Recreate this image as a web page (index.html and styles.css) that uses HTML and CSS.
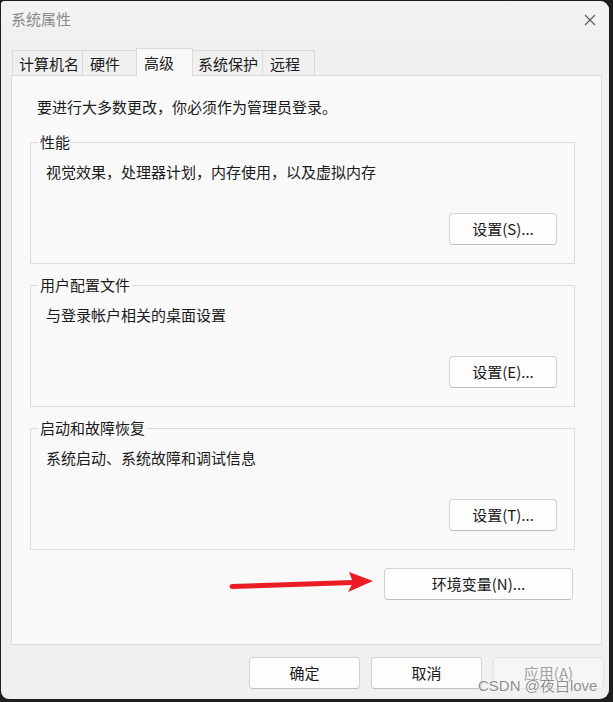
FILE: index.html
```html
<!DOCTYPE html>
<html lang="zh-CN">
<head>
<meta charset="utf-8">
<title>系统属性</title>
<link rel="stylesheet" href="styles.css">
</head>
<body>
<div class="window">
  <div class="titlebar">
    <span class="title">系统属性</span>
    <span class="close" aria-label="关闭">
      <svg width="12" height="12" viewBox="0 0 12 12"><path d="M1 1 L11 11 M11 1 L1 11" stroke="#5a5a5a" stroke-width="1.1" fill="none"/></svg>
    </span>
  </div>

  <div class="tabs">
    <div class="tab tab-a">计算机名</div>
    <div class="tab tab-b">硬件</div>
    <div class="tab tab-c active">高级</div>
    <div class="tab tab-d">系统保护</div>
    <div class="tab tab-e">远程</div>
  </div>

  <div class="panel">
    <div class="intro">要进行大多数更改，你必须作为管理员登录。</div>

    <div class="groups">
      <div class="group">
        <span class="legend">性能</span>
        <div class="desc">视觉效果，处理器计划，内存使用，以及虚拟内存</div>
        <button class="btn btn-set">设置(S)...</button>
      </div>
      <div class="group">
        <span class="legend">用户配置文件</span>
        <div class="desc">与登录帐户相关的桌面设置</div>
        <button class="btn btn-set">设置(E)...</button>
      </div>
      <div class="group">
        <span class="legend">启动和故障恢复</span>
        <div class="desc">系统启动、系统故障和调试信息</div>
        <button class="btn btn-set">设置(T)...</button>
      </div>
    </div>

    <div class="env-row">
      <button class="btn btn-env">环境变量(N)...</button>
    </div>
  </div>

  <div class="footer">
    <button class="btn btn-foot">确定</button>
    <button class="btn btn-foot">取消</button>
    <button class="btn btn-foot disabled">应用(A)</button>
  </div>

  <svg class="arrow" width="150" height="30" viewBox="0 0 150 30">
    <path d="M3 17.5 L124 13.5" stroke="#ec1c24" stroke-width="5" stroke-linecap="round" fill="none"/>
    <polygon points="120,3 144,12 119,23 124,13.5" fill="#ec1c24"/>
  </svg>

  <div class="watermark">CSDN @夜白love</div>
</div>
</body>
</html>
```

FILE: styles.css
```css
html, body {
  margin: 0;
  padding: 0;
}

body {
  width: 613px;
  height: 702px;
  overflow: hidden;
  background: #1e1e1e;
  font-family: "Noto Sans CJK SC", "Noto Sans", sans-serif;
  font-size: 15px;
  color: #1a1a1a;
}

.window {
  position: relative;
  margin: 1px 0 0 1px;
  width: 608px;
  height: 698px;
  border-radius: 4px 9px 9px 8px;
  background: #f0f0f0;
  overflow: hidden;
}

.titlebar {
  height: 36px;
  display: flex;
  align-items: center;
  justify-content: space-between;
  padding: 0 13px 0 10px;
  background: linear-gradient(#f3f3f3, #f0f0f0);
}

.title {
  color: #8a8a8a;
  line-height: 36px;
}

.close {
  display: flex;
  width: 12px;
  height: 12px;
  margin-top: 1px;
}

.tabs {
  margin-top: 11px;
  height: 27px;
  padding-left: 11px;
  display: flex;
  align-items: flex-end;
}

.tab {
  box-sizing: border-box;
  height: 25px;
  line-height: 25px;
  border: 1px solid #dadada;
  border-bottom: none;
  border-left: none;
  background: #f0f0f0;
  color: #1a1a1a;
}

.tab-a { width: 71px; padding-left: 6px; border-left: 1px solid #dadada; }
.tab-b { width: 54px; padding-left: 7px; }
.tab-c { width: 57px; padding-left: 7px; }
.tab-d { width: 70px; padding-left: 5px; }
.tab-e { width: 52px; padding-left: 7px; }

.tab.active {
  height: 28px;
  line-height: 27px;
  margin-bottom: -1px;
  background: #f9f9f9;
  border-left: 1px solid #dadada;
  margin-left: -1px;
  position: relative;
  z-index: 1;
}

.panel {
  box-sizing: border-box;
  margin-left: 10px;
  width: 591px;
  height: 570px;
  border: 1px solid #dcdcdc;
  background: #f9f9f9;
  padding: 21px 26px 0 18px;
}

.intro {
  line-height: 20px;
  padding-left: 7px;
}

.groups {
  margin-top: 25px;
  display: flex;
  flex-direction: column;
  gap: 21px;
}

.group {
  position: relative;
  box-sizing: border-box;
  height: 122px;
  border: 1px solid #dcdcdc;
  padding: 19px 17px 0 15px;
  display: flex;
  flex-direction: column;
}

.legend {
  position: absolute;
  top: -11px;
  left: 7px;
  padding: 0 2px;
  line-height: 20px;
  background: #f9f9f9;
}

.desc {
  line-height: 20px;
}

.btn {
  box-sizing: border-box;
  height: 32px;
  border: 1px solid #d2d2d2;
  border-bottom-color: #bfbfbf;
  border-radius: 4px;
  background: #fdfdfd;
  font-family: "Noto Sans CJK SC", "Noto Sans", sans-serif;
  font-size: 15px;
  color: #1a1a1a;
  padding: 0;
  line-height: 30px;
}

.btn-set {
  align-self: flex-end;
  width: 108px;
  margin-top: 31px;
}

.env-row {
  display: flex;
  justify-content: flex-end;
  margin-top: 18px;
}

.btn-env {
  width: 189px;
  margin-right: 2px;
}

.footer {
  display: flex;
  justify-content: flex-end;
  gap: 11px;
  margin-top: 12px;
  padding-right: 5px;
}

.btn-foot {
  width: 111px;
}

.btn.disabled {
  color: #a3a3a3;
  background: #f6f6f6;
  border-color: #e3e3e3;
}

.arrow {
  position: absolute;
  left: 228px;
  top: 568px;
}

.watermark {
  position: absolute;
  left: 477px;
  top: 675px;
  font-family: "Liberation Sans", "Noto Sans CJK SC", sans-serif;
  font-size: 15px;
  line-height: 20px;
  color: #8e8e8e;
  text-shadow: 0 0 2px #ffffff, 0 0 1px #ffffff;
}
```
